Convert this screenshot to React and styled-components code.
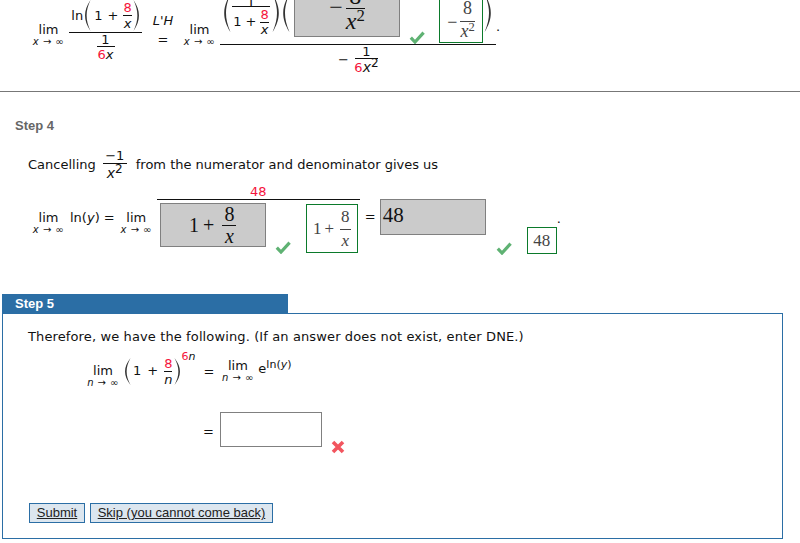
import React from "react";
import styled, { createGlobalStyle } from "styled-components";

const GlobalStyle = createGlobalStyle`
  html, body {
    margin: 0;
    padding: 0;
    background: #fff;
  }
`;

const RED = "#f5143c";
const BLUE = "#2b6ea5";
const GREEN = "#0b7a2b";

const Page = styled.div`
  width: 800px;
  height: 543px;
  overflow: hidden;
  font-family: "DejaVu Sans", Verdana, sans-serif;
  font-size: 13px;
  line-height: 14px;
  color: #111;
`;

const TopSection = styled.section`
  box-sizing: border-box;
  height: 92px;
  border-bottom: 1px solid #777;
  overflow: hidden;
`;

const StepFour = styled.section`
  box-sizing: border-box;
  height: 202px;
  padding-top: 27px;
`;

const StepLabel = styled.div`
  padding-left: 15px;
  font: bold 13px/14px "Liberation Sans", Arial, sans-serif;
  color: #666;
`;

const MathRow = styled.div`
  display: flex;
  align-items: flex-start;
  padding-left: ${(p) => p.$left || 0}px;
  margin-top: ${(p) => p.$top || 0}px;
  height: ${(p) => (p.$height ? `${p.$height}px` : "auto")};
`;

const TextRow = styled.div`
  display: flex;
  align-items: center;
  gap: 9px;
  height: 33px;
  padding-left: 28px;
  margin-top: 15px;
`;

const LimBlock = styled.div`
  display: flex;
  flex-direction: column;
  align-items: center;
  flex: none;
  width: ${(p) => p.$width || 33}px;
  margin: ${(p) => p.$top || 0}px 0 0 ${(p) => p.$left || 0}px;
  line-height: 12px;
`;

const LimSub = styled.span`
  font-size: 10px;
  line-height: 11px;
  letter-spacing: 0.45px;
  white-space: nowrap;
  font-style: italic;

  & b {
    font-weight: normal;
    font-style: normal;
  }
`;

const Frac = styled.div`
  display: inline-flex;
  flex-direction: column;
  align-items: stretch;
  flex: none;
  width: ${(p) => (p.$width ? `${p.$width}px` : "auto")};
  margin: ${(p) => p.$top || 0}px 0 ${(p) => p.$bottom || 0}px ${(p) => p.$left || 0}px;
`;

const Num = styled.div`
  box-sizing: border-box;
  display: flex;
  align-items: ${(p) => p.$align || "center"};
  justify-content: ${(p) => p.$justify || "center"};
  height: ${(p) => (p.$height ? `${p.$height}px` : "auto")};
  white-space: nowrap;
`;

const Den = styled(Num)``;

const Bar = styled.div`
  height: 1px;
  background: #111;
`;

const Red = styled.span`
  color: ${RED};
`;

const Ital = styled.i`
  font-style: italic;
`;

const Sup = styled.sup`
  font-size: ${(p) => p.$size || 11}px;
  line-height: 0;
  vertical-align: 5px;
`;

const BigX = styled.i`
  font-style: italic;
  font-size: 14px;
`;

const Op = styled.span`
  flex: none;
  margin: ${(p) => p.$top || 0}px ${(p) => p.$right || 0}px ${(p) => p.$bottom || 0}px ${(p) => p.$left || 0}px;
  white-space: nowrap;
`;

const Exponent = styled.span`
  flex: none;
  font-size: 11px;
  line-height: 12px;
`;

const HopitalCol = styled.div`
  display: flex;
  flex-direction: column;
  align-items: center;
  flex: none;
  width: 20px;
  margin: 14px 0 0 11px;
  gap: 5px;
`;

const ParenSvg = styled.svg`
  flex: none;
  display: block;
  margin: ${(p) => p.$top || 0}px ${(p) => p.$right || 0}px ${(p) => p.$bottom || 0}px ${(p) => p.$left || 0}px;
  transform: ${(p) => (p.$flip ? "scaleX(-1)" : "none")};
`;

function Paren({ w = 7, h = 30, flip, top, bottom, left, right }) {
  return (
    <ParenSvg width={w} height={h} viewBox="0 0 8 32" preserveAspectRatio="none" $flip={flip} $top={top} $bottom={bottom} $left={left} $right={right}>
      <path d="M7.4 0C3 6 1.2 11 1.2 16C1.2 21 3 26 7.4 32C4.4 26 3 21 3 16C3 11 4.4 6 7.4 0Z" fill="#333" />
    </ParenSvg>
  );
}

const AnswerBox = styled.div`
  box-sizing: border-box;
  flex: none;
  display: flex;
  align-items: ${(p) => (p.$end ? "flex-end" : "center")};
  justify-content: ${(p) => p.$justify || "center"};
  width: ${(p) => p.$w}px;
  height: ${(p) => p.$h}px;
  margin: ${(p) => p.$top || 0}px 0 ${(p) => p.$bottom || 0}px ${(p) => p.$left || 0}px;
  padding-left: ${(p) => p.$pad || 0}px;
  padding-bottom: ${(p) => p.$padBottom || 0}px;
  background: #cbcbcb;
  border: 1px solid #808080;
  font-family: "Liberation Serif", "Times New Roman", serif;
  font-size: ${(p) => p.$size || 24}px;
  line-height: 1;
  color: #111;
`;

const CorrectBox = styled.div`
  box-sizing: border-box;
  flex: none;
  display: flex;
  align-items: ${(p) => (p.$end ? "flex-end" : "center")};
  justify-content: center;
  width: ${(p) => p.$w}px;
  height: ${(p) => p.$h}px;
  margin: ${(p) => p.$top || 0}px 0 ${(p) => p.$bottom || 0}px ${(p) => p.$left || 0}px;
  padding-bottom: ${(p) => p.$padBottom || 0}px;
  border: 1px solid ${GREEN};
  font-family: "Liberation Serif", "Times New Roman", serif;
  font-size: ${(p) => p.$size || 17}px;
  line-height: 1;
  color: #444;
`;

const EmptyInput = styled.input`
  box-sizing: border-box;
  flex: none;
  width: 102px;
  height: 35px;
  margin: 0 0 0 6px;
  padding: 0;
  background: #fff;
  border: 1px solid #808080;
  border-radius: 0;
  outline: none;
`;

const SerifFrac = styled.div`
  display: inline-flex;
  flex-direction: column;
  align-items: center;
  flex: none;
  margin-left: ${(p) => p.$left || 0}px;
  padding: 0 ${(p) => p.$pad || 0}px;
  line-height: 1;
`;

const SerifBar = styled.div`
  align-self: stretch;
  height: 1px;
  margin: ${(p) => p.$above || 0}px ${(p) => -(p.$pad || 0)}px ${(p) => p.$below || 0}px;
  background: currentColor;
`;

const SerifSup = styled.sup`
  font-size: 0.7em;
  line-height: 0;
  vertical-align: 0.5em;
`;

const SerifOp = styled.span`
  flex: none;
  margin-left: ${(p) => p.$left || 0}px;
  margin-bottom: ${(p) => p.$bottom || 0}px;
`;

const IconSvg = styled.svg`
  flex: none;
  display: block;
  margin: ${(p) => p.$top || 0}px 0 ${(p) => p.$bottom || 0}px ${(p) => p.$left || 0}px;
`;

function Check({ top, left, bottom }) {
  return (
    <IconSvg width="16" height="14" viewBox="0 0 16 14" $top={top} $left={left} $bottom={bottom}>
      <path d="M1.8 7.6L6 12L14.6 2.6" fill="none" stroke="#5fb273" strokeWidth="3.2" strokeLinejoin="miter" />
    </IconSvg>
  );
}

function Cross({ top, left }) {
  return (
    <IconSvg width="14" height="14" viewBox="0 0 14 14" $top={top} $left={left}>
      <path d="M2 2L12 12M12 2L2 12" fill="none" stroke="#f2555f" strokeWidth="3.6" />
    </IconSvg>
  );
}

const StepTab = styled.div`
  box-sizing: border-box;
  width: 286px;
  height: 19px;
  margin-left: 2px;
  padding-left: 13px;
  background: ${BLUE};
  color: #fff;
  font: bold 13px/19px "Liberation Sans", Arial, sans-serif;
`;

const Panel = styled.section`
  box-sizing: border-box;
  width: 781px;
  height: 226px;
  margin-left: 2px;
  padding-top: 16px;
  border: 1px solid ${BLUE};
`;

const Lead = styled.p`
  margin: 0;
  padding-left: 25px;
  letter-spacing: 0.12px;
`;

const ButtonRow = styled.div`
  display: flex;
  gap: 5px;
  padding-left: 26px;
  margin-top: 49px;
`;

const SubmitButton = styled.button`
  box-sizing: border-box;
  height: 20px;
  width: ${(p) => p.$w}px;
  padding: 0;
  background: #dce6ef;
  border: 1px solid ${BLUE};
  border-radius: 0;
  color: #222;
  font: 13px/18px "Liberation Sans", Arial, sans-serif;
  text-decoration: underline;
  white-space: nowrap;
`;

const Lim = ({ v = "x", width, top, left }) => (
  <LimBlock $width={width} $top={top} $left={left}>
    lim
    <LimSub>
      {v} <b>→ ∞</b>
    </LimSub>
  </LimBlock>
);

const EightOver = ({ v = "x" }) => (
  <Frac>
    <Num $height={15} $align="flex-end">
      <Red>8</Red>
    </Num>
    <Bar />
    <Den $height={15}>
      <Ital>{v}</Ital>
    </Den>
  </Frac>
);

const SixXSquared = () => (
  <span>
    <Red>6</Red>
    <BigX>x</BigX>
    <Sup $size={12}>2</Sup>
  </span>
);

const MinusEight = ({ above, left, minusBottom }) => (
  <>
    <SerifOp $bottom={minusBottom}>−</SerifOp>
    <SerifFrac $left={left}>
      8
      <SerifBar $above={above} />
      <span>
        <Ital>x</Ital>
        <SerifSup>2</SerifSup>
      </span>
    </SerifFrac>
  </>
);

export default function App() {
  return (
    <Page>
      <GlobalStyle />
      <TopSection>
        <MathRow $left={32}>
          <Lim top={24} />
          <Frac $width={73} $left={4} $top={-1}>
            <Num $height={33}>
              ln
              <Paren w={7} h={31} left={1} />
              <Op $left={3}>1</Op>
              <Op $left={5}>+</Op>
              <Frac $left={5}>
                <EightOver />
              </Frac>
              <Paren w={7} h={31} flip left={1} />
            </Num>
            <Bar />
            <Den $height={30} $align="flex-start">
              <Frac $width={18}>
                <Num $height={13}>1</Num>
                <Bar />
                <Den $height={15}>
                  <span>
                    <Red>6</Red>
                    <Ital>x</Ital>
                  </span>
                </Den>
              </Frac>
            </Den>
          </Frac>
          <HopitalCol>
            <Ital>L'H</Ital>
            =
          </HopitalCol>
          <Lim top={24} left={10} />
          <Frac $width={276} $left={4}>
            <Num $height={44} $align="flex-end" $justify="flex-start">
              <Paren w={8} h={38} bottom={12} left={3} />
              <Frac $bottom={7} $left={1} $width={38}>
                <Num $height={6}>1</Num>
                <Bar />
                <Den $height={30}>
                  1<Op $left={4} $right={4}>+</Op>
                  <EightOver />
                </Den>
              </Frac>
              <Paren w={8} h={38} flip bottom={12} left={2} />
              <Paren w={8} h={38} bottom={12} left={2} />
              <AnswerBox $w={106} $h={50} $bottom={7} $left={4} $padBottom={3} $end>
                <MinusEight above={0} left={3} minusBottom={14} />
              </AnswerBox>
              <Check bottom={0} left={9} />
              <CorrectBox $w={44} $h={54} $bottom={1} $left={14} $size={18} $padBottom={2} $end>
                <MinusEight above={4} left={3} minusBottom={9} />
              </CorrectBox>
              <Paren w={8} h={38} flip bottom={12} left={1} />
            </Num>
            <Bar />
            <Den $height={30}>
              <Op $right={6}>−</Op>
              <Frac $width={23}>
                <Num $height={13}>1</Num>
                <Bar />
                <Den $height={16}>
                  <SixXSquared />
                </Den>
              </Frac>
            </Den>
          </Frac>
          <Op $top={20} $left={0}>.</Op>
        </MathRow>
      </TopSection>

      <StepFour>
        <StepLabel>Step 4</StepLabel>
        <TextRow>
          Cancelling
          <Frac $width={24} $left={-2}>
            <Num $height={15}>−1</Num>
            <Bar />
            <Den $height={17} $align="flex-end">
              <span>
                <BigX>x</BigX>
                <Sup $size={12}>2</Sup>
              </span>
            </Den>
          </Frac>
          from the numerator and denominator gives us
        </TextRow>
        <MathRow $left={32}>
          <Lim top={31} />
          <Op $top={30} $left={5}>
            ln(<Ital>y</Ital>) =
          </Op>
          <Lim top={31} left={5} />
          <Frac $width={203} $left={4}>
            <Num $height={18} $align="flex-end">
              <Red>48</Red>
            </Num>
            <Bar />
            <Den $align="flex-start" $justify="flex-start">
              <AnswerBox $w={106} $h={44} $top={3} $left={3} $size={20}>
                1<SerifOp $left={4}>+</SerifOp>
                <SerifFrac $left={8} $pad={2}>
                  8
                  <SerifBar $above={1} $pad={2} />
                  <Ital>x</Ital>
                </SerifFrac>
              </AnswerBox>
              <Check top={40} left={9} />
              <CorrectBox $w={52} $h={49} $top={4} $left={15}>
                1<SerifOp $left={3}>+</SerifOp>
                <SerifFrac $left={6} $pad={1}>
                  8
                  <SerifBar $above={4} $below={2} $pad={1} />
                  <Ital>x</Ital>
                </SerifFrac>
              </CorrectBox>
            </Den>
          </Frac>
          <Op $top={29} $left={5}>=</Op>
          <AnswerBox $w={106} $h={36} $top={18} $left={4} $justify="flex-start" $pad={2} $padBottom={4} $size={21}>
            48
          </AnswerBox>
          <Check top={60} left={10} />
          <CorrectBox $w={30} $h={27} $top={46} $left={15}>
            48
          </CorrectBox>
          <Op $top={31} $left={0}>.</Op>
        </MathRow>
      </StepFour>

      <StepTab>Step 5</StepTab>
      <Panel>
        <Lead>Therefore, we have the following. (If an answer does not exist, enter DNE.)</Lead>
        <MathRow $left={83} $top={7} $height={40}>
          <Lim v="n" width={34} top={14} />
          <Paren w={7} h={27} top={7} left={4} />
          <Op $top={13} $left={2}>1</Op>
          <Op $top={13} $left={6}>+</Op>
          <Frac $top={5} $left={6}>
            <EightOver v="n" />
          </Frac>
          <Paren w={7} h={27} flip top={7} left={2} />
          <Exponent>
            <Red>6</Red>
            <Ital>n</Ital>
          </Exponent>
          <Op $top={14} $left={8}>=</Op>
          <Lim v="n" top={9} left={7} />
          <Op $top={11} $left={4}>
            e
            <Sup>
              ln(<Ital>y</Ital>)
            </Sup>
          </Op>
        </MathRow>
        <MathRow $left={200} $top={21} $height={42}>
          <Op $top={13}>=</Op>
          <EmptyInput readOnly aria-label="answer" />
          <Cross top={28} left={9} />
        </MathRow>
        <ButtonRow>
          <SubmitButton $w={56}>Submit</SubmitButton>
          <SubmitButton $w={183}>Skip (you cannot come back)</SubmitButton>
        </ButtonRow>
      </Panel>
    </Page>
  );
}
